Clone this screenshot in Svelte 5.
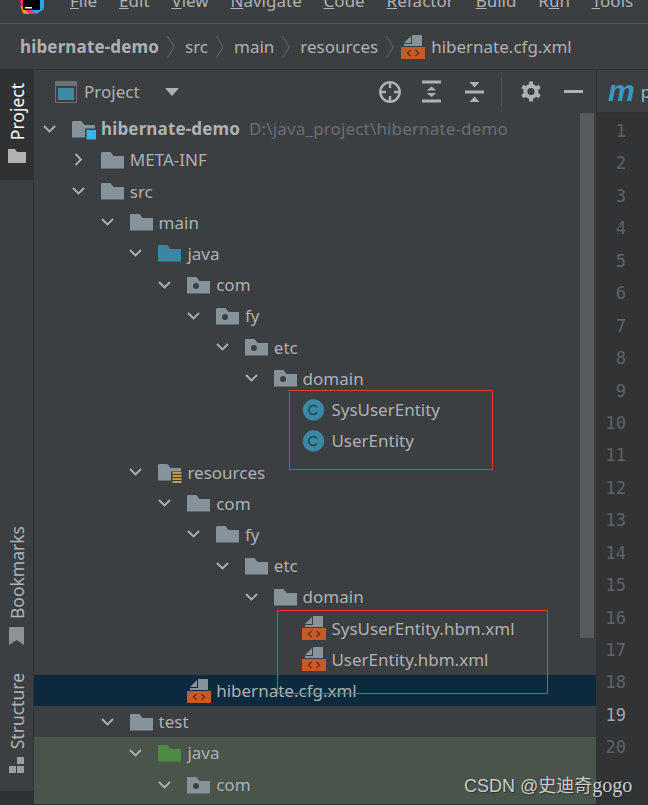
<script>
  const menu = [
    ["", "F", "ile"], ["", "E", "dit"], ["", "V", "iew"], ["", "N", "avigate"], ["", "C", "ode"],
    ["", "R", "efactor"], ["", "B", "uild"], ["R", "u", "n"], ["", "T", "ools"]
  ];
  const rows = [
    { d: 0, open: true, icon: "module", label: "hibernate-demo", bold: true, hint: "D:\\java_project\\hibernate-demo" },
    { d: 1, open: false, icon: "folder", label: "META-INF" },
    { d: 1, open: true, icon: "folder", label: "src" },
    { d: 2, open: true, icon: "folder", label: "main" },
    { d: 3, open: true, icon: "blue", label: "java" },
    { d: 4, open: true, icon: "pkg", label: "com" },
    { d: 5, open: true, icon: "pkg", label: "fy" },
    { d: 6, open: true, icon: "pkg", label: "etc" },
    { d: 7, open: true, icon: "pkg", label: "domain" },
    { d: 8, icon: "class", label: "SysUserEntity" },
    { d: 8, icon: "class", label: "UserEntity" },
    { d: 3, open: true, icon: "res", label: "resources" },
    { d: 4, open: true, icon: "folder", label: "com" },
    { d: 5, open: true, icon: "folder", label: "fy" },
    { d: 6, open: true, icon: "folder", label: "etc" },
    { d: 7, open: true, icon: "folder", label: "domain" },
    { d: 8, icon: "xml", label: "SysUserEntity.hbm.xml" },
    { d: 8, icon: "xml", label: "UserEntity.hbm.xml" },
    { d: 4, icon: "xml", label: "hibernate.cfg.xml", selected: true },
    { d: 2, open: true, icon: "folder", label: "test" },
    { d: 3, open: true, icon: "green", label: "java", test: true },
    { d: 4, open: true, icon: "pkg", label: "com", test: true }
  ];
  const lines = Array.from({ length: 20 }, (_, i) => i + 1);
</script>

{#snippet xmlIcon()}
  <svg class="ic" width="24" height="24" viewBox="0 0 24 24">
    <path d="M11 0h10v11H3V9h8z" fill="#87939a" />
    <path d="M3 8l7-7v7z" fill="#87939a" />
    <rect y="12" width="24" height="12" fill="#c65a28" />
    <path d="M9.500 15l-3 3 3 3M14.500 15l3 3-3 3" fill="none" stroke="#66301a" stroke-width="1.400" />
  </svg>
{/snippet}

{#snippet folderShape(color)}
  <path d="M0 1.500A1 1 0 0 1 1 .5h8.500l3 4H23v12.500H0z" fill={color} />
{/snippet}

{#snippet icon(name)}
  {#if name === "xml"}
    {@render xmlIcon()}
  {:else if name === "class"}
    <svg class="ic" width="24" height="22" viewBox="0 0 24 22">
      <circle cx="11.500" cy="11" r="10.700" fill="#3a87a6" />
      <path d="M15 8.500A4.500 4.500 0 1 0 15 13.500" fill="none" stroke="#1f4658" stroke-width="1.500" />
    </svg>
  {:else}
    <svg class="ic" width="24" height="24" viewBox="0 0 24 24">
      <g transform="translate(0 3.500)">
        {#if name === "blue"}
          {@render folderShape("#3b86a5")}
        {:else if name === "green"}
          {@render folderShape("#4f8a45")}
        {:else if name === "pkg"}
          {@render folderShape("#87939a")}
          <circle cx="9" cy="9.500" r="3" fill="#3c3f41" />
        {:else if name === "res"}
          {@render folderShape("#87939a")}
          <rect x="13" y="8" width="11" height="12" fill="#3c3f41" />
          <path d="M14.500 9.500h9M14.500 12.500h9M14.500 15.500h9M14.500 18.500h9" stroke="#c79a3c" stroke-width="2" />
        {:else if name === "module"}
          {@render folderShape("#87939a")}
          <rect x="13" y="8" width="11" height="12" fill="#3c3f41" />
          <rect x="14.500" y="9.500" width="9.500" height="9.500" fill="#3fb3e4" />
        {:else}
          {@render folderShape("#87939a")}
        {/if}
      </g>
    </svg>
  {/if}
{/snippet}

{#snippet crumbSep()}
  <svg class="sep" width="8" height="24" viewBox="0 0 8 24"><path d="M.5 1l6.500 11L.5 23" fill="none" stroke="#5c5f61" stroke-width="1.200" /></svg>
{/snippet}

<div class="ide">
  <header class="menubar">
    <svg class="logo" width="24" height="14" viewBox="0 0 24 14">
      <path d="M0 0h24v9l-8 5H3z" fill="#ff2d72" />
      <path d="M11 0h13v9l-7 4.500-6-3z" fill="#27a7f2" />
      <path d="M0 5l3 8 6 1z" fill="#f7a514" />
      <rect x="3" y="0" width="17" height="10" fill="#000" />
      <rect x="5" y="7" width="7" height="1.500" fill="#fff" />
    </svg>
    <nav class="menu">
      {#each menu as [pre, key, rest]}
        <span>{pre}<u>{key}</u>{rest}</span>
      {/each}
    </nav>
  </header>

  <div class="crumbs">
    <b>hibernate-demo</b>
    {@render crumbSep()}
    <span>src</span>
    {@render crumbSep()}
    <span>main</span>
    {@render crumbSep()}
    <span>resources</span>
    {@render crumbSep()}
    {@render xmlIcon()}
    <span class="crumb-file">hibernate.cfg.xml</span>
  </div>

  <div class="body">
    <aside class="stripe">
      <div class="tab active">
        <span class="vert">Project</span>
        <svg width="18" height="15" viewBox="0 0 18 15"><path d="M0 1h7l2 3h9v11H0z" fill="#afb1b3" /></svg>
      </div>
      <div class="stripe-low">
        <div class="tab">
          <span class="vert">Bookmarks</span>
          <svg width="15" height="18" viewBox="0 0 15 18"><path d="M0 0h15v18l-7.500-5L0 18z" fill="#8f9193" /></svg>
        </div>
        <div class="tab structure">
          <span class="vert">Structure</span>
          <svg width="15" height="16" viewBox="0 0 15 16"><path d="M8 0h7v7H8zM0 9h7v7H0zM8 9h7v7H8z" fill="#9a9c9e" /></svg>
        </div>
        <div class="stripe-foot"></div>
      </div>
    </aside>

    <section class="panel">
      <div class="toolbar">
        <svg class="project-ic" width="22" height="22" viewBox="0 0 22 22">
          <rect x=".5" y=".5" width="21" height="21" fill="none" stroke="#6e7275" />
          <rect x="1" y="1" width="20" height="4" fill="#6e7275" />
          <rect x="3" y="7" width="16" height="12" fill="#3f88a6" />
        </svg>
        <span class="tool-title">Project</span>
        <svg class="caret" width="14" height="8" viewBox="0 0 14 8"><path d="M0 0h14L7 8z" fill="#afb1b3" /></svg>
        <div class="tools">
          <svg width="22" height="22" viewBox="0 0 22 22">
            <circle cx="11" cy="11" r="9.700" fill="none" stroke="#afb1b3" stroke-width="2.400" />
            <path d="M11 2v5M11 15v5M2 11h5M15 11h5" stroke="#afb1b3" stroke-width="2.400" />
          </svg>
          <svg class="t-expand" width="19" height="23" viewBox="0 0 19 23">
            <path d="M0 2h19M0 21h19" stroke="#afb1b3" stroke-width="3.200" />
            <path d="M9.500 6.500l4.800 4H4.700zM9.500 17l-4.800-4h9.600z" fill="#afb1b3" />
          </svg>
          <svg class="t-collapse" width="19" height="20" viewBox="0 0 19 20">
            <path d="M0 10h19" stroke="#afb1b3" stroke-width="3" />
            <path d="M4.500 0h10l-5 5.500zM4.500 20h10l-5-5.500z" fill="#afb1b3" />
          </svg>
          <i class="divider"></i>
          <svg class="t-gear" width="20" height="21" viewBox="0 0 20 21">
            <circle cx="10" cy="10.500" r="5.600" fill="none" stroke="#afb1b3" stroke-width="4" />
            <path d="M10 .5v4M10 16.500v4M1.300 5.500l3.500 2M15.200 13.500l3.500 2M1.300 15.500l3.500-2M15.200 7.500l3.500-2" stroke="#afb1b3" stroke-width="4" />
          </svg>
          <svg class="t-min" width="19" height="3" viewBox="0 0 19 3"><rect width="19" height="3" fill="#afb1b3" /></svg>
        </div>
      </div>

      <div class="tree">
        {#each rows as row}
          <div class="row" class:selected={row.selected} class:test={row.test} style="padding-left: {9 + 28.8 * row.d}px">
            <span class="chev">
              {#if row.open === true}
                <svg width="13" height="8" viewBox="0 0 13 8"><path d="M1 1l5.500 5.500L12 1" fill="none" stroke="#afb1b3" stroke-width="1.800" /></svg>
              {:else if row.open === false}
                <svg width="9" height="13" viewBox="0 0 9 13"><path d="M1.500 1l5.500 5.500L1.500 12" fill="none" stroke="#afb1b3" stroke-width="1.800" /></svg>
              {/if}
            </span>
            {@render icon(row.icon)}
            {#if row.bold}
              <b class="label">{row.label}</b><span class="hint">{row.hint}</span>
            {:else}
              <span class="label">{row.label}</span>
            {/if}
          </div>
        {/each}
        <div class="scrollbar"></div>
      </div>
    </section>

    <section class="editor">
      <div class="editor-tab"><em>m</em><span>p</span></div>
      <div class="gutter">
        {#each lines as n}
          <span class:current={n === 19}>{n}</span>
        {/each}
      </div>
    </section>
  </div>

  <div class="mark mark-a"></div>
  <div class="mark mark-b"></div>
  <div class="watermark">CSDN @史迪奇<span>gogo</span></div>
</div>

<style>
  :global(body) {
    margin: 0;
    background: #3c3f41;
  }

  .ide {
    position: relative;
    width: 648px;
    height: 805px;
    overflow: hidden;
    display: flex;
    flex-direction: column;
    background: #3c3f41;
    color: #afb1b3;
    font-family: "Noto Sans", "Open Sans", sans-serif;
    font-size: 17px;
  }

  svg {
    display: block;
    flex: none;
  }

  .menubar {
    height: 23px;
    flex: none;
    display: flex;
    align-items: flex-start;
    padding-left: 20px;
    border-bottom: 1px solid #54575a;
    overflow: hidden;
  }

  .menu {
    display: flex;
    gap: 21.900px;
    margin-left: 26px;
    margin-top: -11px;
    line-height: 24px;
  }

  .crumbs {
    height: 45px;
    flex: none;
    display: flex;
    align-items: center;
    padding-left: 20px;
    border-bottom: 1px solid #2f3133;
  }

  .crumbs b {
    font-weight: 700;
    letter-spacing: .15px;
  }

  .crumbs .ic {
    margin-left: -3px;
  }

  .sep {
    margin: 0 10px 0 8px;
  }

  .crumb-file {
    margin-left: 6px;
  }

  .body {
    flex: 1;
    min-height: 0;
    display: flex;
  }

  .stripe {
    width: 33px;
    flex: none;
    display: flex;
    flex-direction: column;
    border-right: 1px solid #2f3133;
  }

  .tab {
    display: flex;
    flex-direction: column;
    align-items: center;
    gap: 8px;
  }

  .tab.active {
    height: 110px;
    box-sizing: border-box;
    padding-top: 13px;
    background: #2f3133;
    color: #fff;
  }

  .vert {
    writing-mode: vertical-rl;
    transform: rotate(180deg);
    font-size: 17.500px;
    line-height: 20px;
  }

  .stripe-low {
    margin-top: auto;
    display: flex;
    flex-direction: column;
  }

  .structure {
    margin-top: 28px;
  }

  .stripe-foot {
    height: 14px;
    margin-top: 18px;
    background: #2f3133;
  }

  .panel {
    width: 562px;
    flex: none;
    display: flex;
    flex-direction: column;
    min-width: 0;
  }

  .toolbar {
    height: 43px;
    flex: none;
    display: flex;
    align-items: center;
    padding-left: 21px;
  }

  .tool-title {
    margin-left: 7px;
  }

  .caret {
    margin-left: 25px;
  }

  .tools {
    margin-left: auto;
    margin-right: 13px;
    display: flex;
    align-items: center;
  }

  .t-expand {
    margin-left: 21px;
  }

  .t-collapse {
    margin-left: 24px;
  }

  .divider {
    width: 1px;
    height: 28px;
    background: #54575a;
    margin: 0 19px 0 17px;
  }

  .t-min {
    margin-left: 23px;
  }

  .tree {
    position: relative;
    flex: 1;
    min-height: 0;
    overflow: hidden;
    border-bottom: 1px solid #2f3133;
  }

  .row {
    height: 31.220px;
    display: flex;
    align-items: center;
    white-space: nowrap;
    box-sizing: border-box;
  }

  .row.selected {
    background: #0d293e;
  }

  .row.test {
    background: #49544a;
  }

  /* last row runs on to the panel edge */
  .row:nth-child(22) {
    height: 36px;
    padding-bottom: 4px;
  }

  .chev {
    width: 13px;
    margin-right: 16px;
    flex: none;
    display: flex;
    justify-content: center;
  }

  .label {
    margin-left: 5px;
  }

  b.label {
    font-weight: 700;
    letter-spacing: .15px;
  }

  .hint {
    margin-left: 9px;
    color: #6b6e70;
    letter-spacing: .15px;
  }

  .scrollbar {
    position: absolute;
    top: 0;
    right: 2px;
    width: 14px;
    height: 525px;
    background: #585a5c;
  }

  .editor {
    flex: 1;
    min-width: 0;
    display: flex;
    flex-direction: column;
  }

  .editor-tab {
    height: 42px;
    flex: none;
    display: flex;
    align-items: center;
    gap: 6px;
    padding-left: 11px;
    border-left: 1px solid #2f3133;
    border-bottom: 1px solid #2f3133;
    overflow: hidden;
  }

  .editor-tab em {
    font-family: "Liberation Sans", sans-serif;
    font-size: 30px;
    font-weight: 700;
    line-height: 30px;
    color: #3d96bd;
  }

  .gutter {
    flex: 1;
    display: flex;
    flex-direction: column;
    align-items: flex-end;
    padding: 2px 22px 0 0;
    background: #313335;
    font-family: "DejaVu Sans Mono", monospace;
    font-size: 17px;
    color: #606366;
  }

  .gutter span {
    height: 32.450px;
    line-height: 32.450px;
    flex: none;
  }

  .gutter .current {
    color: #a4a3a3;
  }

  .mark {
    position: absolute;
    border: 1px solid #e8383a;
    box-sizing: border-box;
    pointer-events: none;
  }

  .mark-a {
    left: 289px;
    top: 390px;
    width: 204px;
    height: 80px;
  }

  .mark-b {
    left: 277px;
    top: 610px;
    width: 271px;
    height: 84px;
  }

  .watermark {
    position: absolute;
    left: 464px;
    top: 773px;
    font-family: "Liberation Sans", "Noto Sans CJK SC", sans-serif;
    font-size: 18px;
    line-height: 24px;
    color: #c9cbcc;
    text-shadow: 1px 1px 1px #2b2d2e;
    white-space: nowrap;
  }

  .watermark span {
    font-family: "Liberation Serif", serif;
    font-size: 20px;
  }
</style>
